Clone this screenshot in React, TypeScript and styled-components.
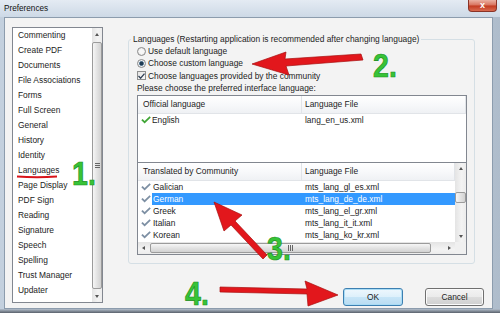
import React from 'react';
import styled, { createGlobalStyle } from 'styled-components';

const GlobalStyle = createGlobalStyle`
  html, body {
    margin: 0;
    padding: 0;
    width: 500px;
    height: 313px;
    overflow: hidden;
    background: #5b6470;
  }
  * { box-sizing: border-box; }
`;

const Window = styled.div`
  position: relative;
  width: 500px;
  height: 313px;
  display: flex;
  flex-direction: column;
  background: linear-gradient(90deg, #c3d0de, #d3dde8 40%, #c6d3e1 80%, #aebccb);
  font-family: "Liberation Sans", Arial, sans-serif;
  font-size: 8.4px;
  color: #1c1c1c;
  overflow: hidden;
`;

const TitleBar = styled.div`
  height: 17px;
  flex-shrink: 0;
  display: flex;
  align-items: flex-start;
  padding-left: 4px;
  background: linear-gradient(#e4ebf3, #cdd9e6);
`;

const Title = styled.span`
  font-size: 8.2px;
  line-height: 17px;
  color: #111;
`;

const CloseButton = styled.div`
  margin-left: auto;
  margin-right: 3px;
  width: 29px;
  height: 12px;
  border: 1px solid #8a3326;
  border-top: none;
  border-radius: 0 0 4px 4px;
  background: linear-gradient(#eab0a2, #d8715c 48%, #c2391f 52%, #d96a50);
  color: #fff;
  font-size: 9px;
  font-weight: bold;
  display: flex;
  align-items: center;
  justify-content: center;
  line-height: 1;
`;

const Frame = styled.div`
  flex: 1;
  display: flex;
  padding: 0 7px 0 4px;
`;

const BottomEdge = styled.div`
  height: 4px;
  flex-shrink: 0;
  background: linear-gradient(#b3bfcc, #59616b);
`;

const Client = styled.div`
  flex: 1;
  display: flex;
  background: #f3f3f3;
  border: 1px solid #8c9cad;
`;

/* ---------- left category list ---------- */

const Nav = styled.div`
  margin: 9px 0 0 7px;
  width: 91px;
  height: 276px;
  border: 1px solid #828790;
  background: #fff;
  display: flex;
`;

const NavItems = styled.ul`
  list-style: none;
  margin: 0;
  padding: 0;
  flex: 1;
  overflow: hidden;
`;

const NavItem = styled.li`
  height: 15px;
  line-height: 15px;
  padding-left: 5px;
  white-space: nowrap;
`;

/* ---------- scrollbars ---------- */

const VScroll = styled.div<{ $w: number }>`
  width: ${p => p.$w}px;
  flex-shrink: 0;
  display: flex;
  flex-direction: column;
  background: linear-gradient(90deg, #e4e4e4, #f3f3f3 60%, #ececec);
`;

const HScroll = styled.div`
  display: flex;
  align-items: stretch;
  background: linear-gradient(#e4e4e4, #f3f3f3 60%, #ececec);
`;

const ArrowBox = styled.div<{ $size: number }>`
  flex: 0 0 ${p => p.$size}px;
  display: flex;
  align-items: center;
  justify-content: center;
`;

const Tri = styled.span<{ $dir: 'up' | 'down' | 'left' | 'right' }>`
  width: 0;
  height: 0;
  border: 2px solid transparent;
  ${p => p.$dir === 'up' && 'border-bottom: 3px solid #555; border-top-width: 0;'}
  ${p => p.$dir === 'down' && 'border-top: 3px solid #555; border-bottom-width: 0;'}
  ${p => p.$dir === 'left' && 'border-right: 3px solid #555; border-left-width: 0;'}
  ${p => p.$dir === 'right' && 'border-left: 3px solid #555; border-right-width: 0;'}
`;

const Thumb = styled.div<{ $vertical?: boolean; $size?: number; $gap: number }>`
  ${p =>
    p.$vertical
      ? `margin: ${p.$gap}px 0 1px; ${p.$size ? `height: ${p.$size}px; flex-shrink: 0;` : 'flex: 1;'}
         background: linear-gradient(90deg, #f6f6f6, #e3e3e3 50%, #d2d2d2);`
      : `margin: 1px 0 1px ${p.$gap}px; ${p.$size ? `width: ${p.$size}px; flex-shrink: 0;` : 'flex: 1;'}
         background: linear-gradient(#f6f6f6, #e3e3e3 50%, #d2d2d2);`}
  border: 1px solid #9b9b9b;
  border-radius: 2px;
  display: flex;
  align-items: center;
  justify-content: center;
`;

const Grip = styled.span<{ $vertical?: boolean }>`
  width: ${p => (p.$vertical ? 5 : 6)}px;
  height: ${p => (p.$vertical ? 5 : 6)}px;
  background: ${p =>
    p.$vertical
      ? 'repeating-linear-gradient(#666 0 1px, transparent 1px 2px)'
      : 'repeating-linear-gradient(90deg, #666 0 1px, transparent 1px 2px)'};
`;

const Spacer = styled.div`
  flex: 1;
`;

const Corner = styled.div`
  background: #f0f0f0;
`;

/* ---------- right side ---------- */

const RightColumn = styled.div`
  flex: 1;
  margin-left: 25px;
  display: flex;
  flex-direction: column;
  min-width: 0;
`;

const GroupBox = styled.fieldset`
  margin: 16px 17px 0 0;
  padding: 0 7px 8px 8px;
  min-width: 0;
  border: 1px solid #d5dfe5;
  border-radius: 3px;
`;

const Legend = styled.legend`
  margin-left: -6px;
  padding: 0 2px;
  line-height: 11px;
  white-space: nowrap;
`;

const Choice = styled.label<{ $h: number }>`
  display: flex;
  align-items: center;
  gap: 2px;
  height: ${p => p.$h}px;
  white-space: nowrap;
`;

const Radio = styled.span<{ $checked?: boolean }>`
  width: 9px;
  height: 9px;
  flex-shrink: 0;
  border-radius: 50%;
  border: 1px solid #8a8a8a;
  background: ${p =>
    p.$checked
      ? 'radial-gradient(circle, #1f3b52 0 1.6px, #6f8ca3 2.2px, #eef1f4 2.8px, #d5d8dc 4.5px)'
      : 'radial-gradient(circle, #f7f7f7 0 2px, #dcdcdc 4.5px)'};
`;

const CheckBox = styled.span`
  width: 9px;
  height: 9px;
  flex-shrink: 0;
  border: 1px solid #8e8f8f;
  background: linear-gradient(135deg, #e4e4e4, #fafafa);
  display: flex;
  align-items: center;
  justify-content: center;
`;

const Prompt = styled.div`
  height: 13px;
  line-height: 13px;
  white-space: nowrap;
`;

const ListView = styled.div<{ $h: number; $joined?: boolean }>`
  height: ${p => p.$h}px;
  border: 1px solid #828790;
  ${p => (p.$joined ? 'border-top: none;' : '')}
  background: #fff;
  overflow: hidden;
`;

const ScrollGrid = styled.div`
  height: 100%;
  display: grid;
  grid-template-columns: 1fr 11px;
  grid-template-rows: 1fr 12px;
`;

const ListContent = styled.div`
  overflow: hidden;
`;

const HeaderRow = styled.div`
  display: grid;
  grid-template-columns: 164px 1fr;
  height: 18px;
  background: linear-gradient(#ffffff, #f7f8fa 55%, #eff1f4);
  border-bottom: 1px solid #e1e4e8;
`;

const HeaderCell = styled.div<{ $pad: number }>`
  line-height: 17px;
  padding-left: ${p => p.$pad}px;
  border-right: 1px solid #e1e4e8;
  white-space: nowrap;
`;

const Row = styled.div`
  display: flex;
  height: 12px;
  align-items: center;
`;

const IconCell = styled.span`
  width: 14px;
  flex-shrink: 0;
  padding-left: 3px;
  display: flex;
  align-items: center;
`;

const RowBody = styled.div<{ $selected?: boolean }>`
  flex: 1;
  display: grid;
  grid-template-columns: 150px 1fr;
  height: 12px;
  line-height: 12px;
  white-space: nowrap;
  overflow: hidden;
  background: ${p => (p.$selected ? '#3399ff' : 'transparent')};
  color: ${p => (p.$selected ? '#fff' : '#1c1c1c')};
`;

const Cell = styled.span<{ $pad: number }>`
  padding-left: ${p => p.$pad}px;
`;

const ButtonRow = styled.div`
  margin-top: auto;
  display: flex;
  justify-content: flex-end;
  gap: 22px;
  padding: 0 8px 2px 0;
`;

const Button = styled.button<{ $w: number; $default?: boolean }>`
  width: ${p => p.$w}px;
  height: 18px;
  padding: 0;
  font: inherit;
  color: #1c1c1c;
  border-radius: 3px;
  border: 1px solid ${p => (p.$default ? '#3c7fb1' : '#707070')};
  background: ${p =>
    p.$default
      ? 'linear-gradient(#eef7fd, #ddf0fb 50%, #c7e5f7 51%, #b9dcf2)'
      : 'linear-gradient(#f3f3f3, #ebebeb 50%, #dddddd 51%, #cfcfcf)'};
  box-shadow: inset 0 0 0 1px ${p => (p.$default ? '#a9dcf5' : '#fbfbfb')};
`;

/* ---------- annotations drawn over the screenshot ---------- */

const Overlay = styled.svg`
  position: absolute;
  left: 0;
  top: 0;
  pointer-events: none;
`;

const Step = styled.span<{ $x: number; $y: number }>`
  position: absolute;
  left: ${p => p.$x}px;
  top: ${p => p.$y - 4.5}px;
  font-family: "Liberation Sans", Arial, sans-serif;
  font-size: 34px;
  font-weight: bold;
  line-height: 34px;
  color: #37c337;
  -webkit-text-stroke: 0.7px #1b8e1b;
  transform: scaleX(0.84);
  transform-origin: left top;
  pointer-events: none;
`;

const Tick = ({ color }: { color: string }) => (
  <svg width="10" height="8" viewBox="0 0 10 8">
    <path d="M0.3 4.2 L1.6 3 L3.6 5 L8.6 0.3 L9.8 1.4 L3.6 7.6 Z" fill={color} />
  </svg>
);

const BoxTick = () => (
  <svg width="7" height="6" viewBox="0 0 7 6">
    <path d="M0.5 3 L2.6 5.2 L6.5 0.6" stroke="#2f3f55" strokeWidth="1.3" fill="none" />
  </svg>
);

const categories = [
  'Commenting', 'Create PDF', 'Documents', 'File Associations', 'Forms', 'Full Screen',
  'General', 'History', 'Identity', 'Languages', 'Page Display', 'PDF Sign', 'Reading',
  'Signature', 'Speech', 'Spelling', 'Trust Manager', 'Updater',
];

const community = [
  { name: 'Galician', file: 'mts_lang_gl_es.xml' },
  { name: 'German', file: 'mts_lang_de_de.xml', selected: true },
  { name: 'Greek', file: 'mts_lang_el_gr.xml' },
  { name: 'Italian', file: 'mts_lang_it_it.xml' },
  { name: 'Korean', file: 'mts_lang_ko_kr.xml' },
];

const App = () => {
  return (
    <Window>
      <GlobalStyle />
      <TitleBar>
        <Title>Preferences</Title>
        <CloseButton>x</CloseButton>
      </TitleBar>
      <Frame>
        <Client>
          <Nav>
            <NavItems>
              {categories.map(c => (
                <NavItem key={c}>{c}</NavItem>
              ))}
            </NavItems>
            <VScroll $w={10}>
              <ArrowBox $size={12}><Tri $dir="up" /></ArrowBox>
              <Thumb $vertical $gap={2}><Grip $vertical /></Thumb>
              <ArrowBox $size={12}><Tri $dir="down" /></ArrowBox>
            </VScroll>
          </Nav>

          <RightColumn>
            <GroupBox>
              <Legend>Languages (Restarting application is recommended after changing language)</Legend>
              <Choice $h={12}><Radio />Use default language</Choice>
              <Choice $h={12}><Radio $checked />Choose custom language</Choice>
              <Choice $h={13}><CheckBox><BoxTick /></CheckBox>Choose languages provided by the community</Choice>
              <Prompt>Please choose the preferred interface language:</Prompt>

              <ListView $h={68}>
                <HeaderRow>
                  <HeaderCell $pad={5}>Official language</HeaderCell>
                  <HeaderCell $pad={3}>Language File</HeaderCell>
                </HeaderRow>
                <Row>
                  <IconCell><Tick color="#3fa535" /></IconCell>
                  <RowBody>
                    <Cell $pad={0}>English</Cell>
                    <Cell $pad={3}>lang_en_us.xml</Cell>
                  </RowBody>
                </Row>
              </ListView>

              <ListView $h={92} $joined>
                <ScrollGrid>
                  <ListContent>
                    <HeaderRow>
                      <HeaderCell $pad={5}>Translated by Community</HeaderCell>
                      <HeaderCell $pad={3}>Language File</HeaderCell>
                    </HeaderRow>
                    {community.map(l => (
                      <Row key={l.name}>
                        <IconCell><Tick color="#7d8fa3" /></IconCell>
                        <RowBody $selected={l.selected}>
                          <Cell $pad={1}>{l.name}</Cell>
                          <Cell $pad={3}>{l.file}</Cell>
                        </RowBody>
                      </Row>
                    ))}
                  </ListContent>
                  <VScroll $w={11}>
                    <ArrowBox $size={11}><Tri $dir="up" /></ArrowBox>
                    <Thumb $vertical $size={11} $gap={18} />
                    <Spacer />
                    <ArrowBox $size={11}><Tri $dir="down" /></ArrowBox>
                  </VScroll>
                  <HScroll>
                    <ArrowBox $size={11}><Tri $dir="left" /></ArrowBox>
                    <Thumb $size={281} $gap={1}><Grip /></Thumb>
                    <Spacer />
                    <ArrowBox $size={11}><Tri $dir="right" /></ArrowBox>
                  </HScroll>
                  <Corner />
                </ScrollGrid>
              </ListView>
            </GroupBox>

            <ButtonRow>
              <Button $w={60} $default>OK</Button>
              <Button $w={59}>Cancel</Button>
            </ButtonRow>
          </RightColumn>
        </Client>
      </Frame>
      <BottomEdge />

      <Overlay width="500" height="313" viewBox="0 0 500 313">
        <path d="M17 176.5 Q37 178 57 176.5" stroke="#d8141a" strokeWidth="2" fill="none" />
        <g fill="#e2171c" stroke="#a80f0f" strokeWidth="0.7" strokeLinejoin="round">
          <polygon points="252,64 286,52 285,59 361,54 363,60 286,66 289,75" />
          <polygon points="214,202 242,215 235,221 267,255 263,259 231,225 224,231" />
          <polygon points="220,287 307,289 305,281 338,295 308,306 307,294 220,292" />
        </g>
      </Overlay>
      <Step $x={72} $y={160}>1.</Step>
      <Step $x={373} $y={52}>2.</Step>
      <Step $x={267} $y={235}>3.</Step>
      <Step $x={185} $y={280}>4.</Step>
    </Window>
  );
};

export default App;
